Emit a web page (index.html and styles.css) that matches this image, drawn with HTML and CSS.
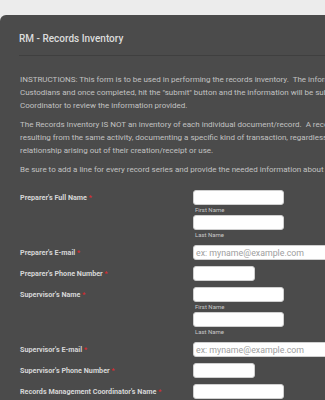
FILE: index.html
```html
<!DOCTYPE html>
<html lang="en">
<head>
    <meta charset="UTF-8">
    <meta name="viewport" content="width=device-width, initial-scale=1.0">
    <title>RM - Records Inventory</title>
    <link rel="stylesheet" href="styles.css">
</head>
<body>
    <div class="form-card">
        <div class="form-header">
            <h2>RM - Records Inventory</h2>
        </div>

        <div class="intro">
            <p>INSTRUCTIONS: This form is to be used in performing the records inventory.&nbsp; The information is to be provided by the Records<br>Custodians and once completed, hit the "submit" button and the information will be submitted to the Records Management<br>Coordinator to review the information provided.</p>
            <p>The Records Inventory IS NOT an inventory of each individual document/record.&nbsp; A record series is a group of related records<br>resulting from the same activity, documenting a specific kind of transaction, regardless of format, that have some type of<br>relationship arising out of their creation/receipt or use.</p>
            <p>Be sure to add a line for every record series and provide the needed information about each.</p>
        </div>

        <div class="field">
            <label>Preparer's Full Name <span class="req">*</span></label>
            <div class="inputs name">
                <input type="text">
                <span class="sub">First Name</span>
                <input type="text">
                <span class="sub">Last Name</span>
            </div>
        </div>

        <div class="field">
            <label>Preparer's E-mail <span class="req">*</span></label>
            <div class="inputs">
                <input type="email" class="email" placeholder="ex: myname@example.com">
            </div>
        </div>

        <div class="field">
            <label>Preparer's Phone Number <span class="req">*</span></label>
            <div class="inputs">
                <input type="text" class="phone">
            </div>
        </div>

        <div class="field">
            <label>Supervisor's Name <span class="req">*</span></label>
            <div class="inputs name">
                <input type="text">
                <span class="sub">First Name</span>
                <input type="text">
                <span class="sub">Last Name</span>
            </div>
        </div>

        <div class="field">
            <label>Supervisor's E-mail <span class="req">*</span></label>
            <div class="inputs">
                <input type="email" class="email" placeholder="ex: myname@example.com">
            </div>
        </div>

        <div class="field">
            <label>Supervisor's Phone Number <span class="req">*</span></label>
            <div class="inputs">
                <input type="text" class="phone">
            </div>
        </div>

        <div class="field">
            <label>Records Management Coordinator's Name <span class="req">*</span></label>
            <div class="inputs">
                <input type="text">
            </div>
        </div>
    </div>
</body>
</html>
```

FILE: styles.css
```css
html, body {
    margin: 0;
    height: 100%;
    overflow: hidden;
}

body {
    background: #ececec;
    font-family: Roboto, "Liberation Sans", sans-serif;
    padding-top: 15px;
    box-sizing: border-box;
}

.form-card {
    background: #4b4b4b;
    border-radius: 6px 6px 0 0;
    width: 640px;
    min-height: 600px;
    padding: 0 0 0 19px;
}

.form-header {
    padding: 17px 0 9px;
    border-bottom: 1px solid #3f3f3f;
}

.form-header h2 {
    margin: 0;
    font-size: 10px;
    line-height: 14px;
    font-weight: 500;
    color: #dcdcdc;
}

.intro {
    padding: 17px 0 8px 1px;
}

.intro p {
    margin: 0 0 6px;
    font-size: 8px;
    line-height: 13px;
    color: #c2c2c2;
    white-space: nowrap;
}

.field {
    display: flex;
    margin-bottom: 6px;
    padding-left: 1px;
}

.field label {
    width: 173px;
    flex-shrink: 0;
    font-size: 7.2px;
    font-weight: 700;
    color: #d6d6d6;
    line-height: 13px;
    padding-top: 1px;
}

.req {
    color: #e3262b;
    font-weight: 400;
}

.inputs {
    display: flex;
    flex-direction: column;
    align-items: flex-start;
}

.inputs input {
    width: 91px;
    height: 15px;
    box-sizing: border-box;
    margin: 0;
    border: 1px solid #d0d0d0;
    border-radius: 3px;
    background: #fff;
    padding: 0 2px;
    font-family: Roboto, "Liberation Sans", sans-serif;
    font-size: 8.8px;
}

.inputs input::placeholder {
    color: #9e9e9e;
}

.inputs .email {
    width: 150px;
}

.inputs .phone {
    width: 62px;
}

.sub {
    font-size: 6px;
    line-height: 10px;
    height: 10px;
    color: #c8c8c8;
    padding-left: 2px;
}

.name .sub:last-child {
    height: 9px;
}
```
